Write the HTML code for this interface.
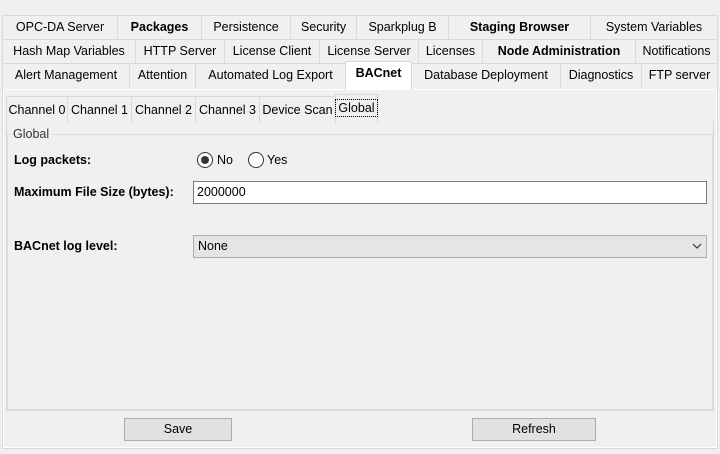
<!DOCTYPE html>
<html><head><style>
*{margin:0;padding:0;box-sizing:border-box}
body{width:720px;height:454px;background:#f0f0f0;font-family:"Liberation Sans",sans-serif;font-size:12.5px;color:#000;position:relative;overflow:hidden}
.a{position:absolute}
.t{position:absolute;border:1px solid #d9d9d9;border-bottom:none;background:#f0f0f0;text-align:center;white-space:nowrap}
.b{font-weight:bold}
.lbl{position:absolute;font-weight:bold}
.rad{position:absolute;width:16px;height:16px;border:1px solid #333;border-radius:50%;background:#fff}
.btn{position:absolute;border:1px solid #adadad;background:#e1e1e1;text-align:center;line-height:21px}
</style></head><body>
<div class="a" style="left:2px;top:88px;width:716px;height:361px;border:1px solid #d9d9d9;background:#f0f0f0;box-shadow:inset 1px 1px 0 #fff,inset -1px -1px 0 #fff"></div>

<div class="t" style="left:2px;top:15px;width:116px;height:24px;line-height:23px">OPC-DA Server</div>
<div class="t b" style="left:117px;top:15px;width:85px;height:24px;line-height:23px">Packages</div>
<div class="t" style="left:201px;top:15px;width:90px;height:24px;line-height:23px">Persistence</div>
<div class="t" style="left:290px;top:15px;width:67px;height:24px;line-height:23px">Security</div>
<div class="t" style="left:356px;top:15px;width:93px;height:24px;line-height:23px">Sparkplug B</div>
<div class="t b" style="left:448px;top:15px;width:143px;height:24px;line-height:23px">Staging Browser</div>
<div class="t" style="left:590px;top:15px;width:128px;height:24px;line-height:23px">System Variables</div>

<div class="t" style="left:2px;top:39px;width:134px;height:24px;line-height:23px">Hash Map Variables</div>
<div class="t" style="left:135px;top:39px;width:90px;height:24px;line-height:23px">HTTP Server</div>
<div class="t" style="left:224px;top:39px;width:96px;height:24px;line-height:23px">License Client</div>
<div class="t" style="left:319px;top:39px;width:100px;height:24px;line-height:23px">License Server</div>
<div class="t" style="left:418px;top:39px;width:65px;height:24px;line-height:23px">Licenses</div>
<div class="t b" style="left:482px;top:39px;width:154px;height:24px;line-height:23px">Node Administration</div>
<div class="t" style="left:635px;top:39px;width:83px;height:24px;line-height:23px">Notifications</div>

<div class="t" style="left:2px;top:63px;width:128px;height:26px;line-height:23px">Alert Management</div>
<div class="t" style="left:129px;top:63px;width:67px;height:26px;line-height:23px">Attention</div>
<div class="t" style="left:195px;top:63px;width:151px;height:26px;line-height:23px">Automated Log Export</div>
<div class="t" style="left:411px;top:63px;width:150px;height:26px;line-height:23px">Database Deployment</div>
<div class="t" style="left:560px;top:63px;width:82px;height:26px;line-height:23px">Diagnostics</div>
<div class="t" style="left:641px;top:63px;width:77px;height:26px;line-height:23px">FTP server</div>
<div class="t b" style="left:345px;top:61px;width:67px;height:29px;line-height:22px;background:#fff">BACnet</div>

<div class="a" style="left:6px;top:121px;width:708px;height:290px;border:1px solid #d9d9d9;border-top:none"></div>
<div class="t" style="left:6px;top:96px;width:62px;height:26px;line-height:27px">Channel 0</div>
<div class="t" style="left:67px;top:96px;width:65px;height:26px;line-height:27px">Channel 1</div>
<div class="t" style="left:131px;top:96px;width:65px;height:26px;line-height:27px">Channel 2</div>
<div class="t" style="left:195px;top:96px;width:65px;height:26px;line-height:27px">Channel 3</div>
<div class="t" style="left:259px;top:96px;width:77px;height:26px;line-height:27px">Device Scan</div>
<div class="t" style="left:335px;top:94px;width:43px;height:29px;line-height:27px"><span style="outline:1px dotted #000;padding:1px 2px">Global</span></div>

<div class="a" style="left:7px;top:134px;width:706px;height:276px;border:1px solid #dcdcdc"></div>
<div class="a" style="left:11px;top:127px;background:#f0f0f0;padding:0 2px;color:#333">Global</div>

<div class="lbl" style="left:14px;top:153px">Log packets:</div>
<div class="rad" style="left:197px;top:152px"><div class="a" style="left:3px;top:3px;width:8px;height:8px;border-radius:50%;background:#333"></div></div>
<div class="a" style="left:217px;top:153px">No</div>
<div class="rad" style="left:248px;top:152px"></div>
<div class="a" style="left:267px;top:153px">Yes</div>

<div class="lbl" style="left:14px;top:185px">Maximum File Size (bytes):</div>
<div class="a" style="left:193px;top:181px;width:514px;height:23px;border:1px solid #7a7a7a;background:#fff;padding-left:3px;line-height:21px">2000000</div>

<div class="lbl" style="left:14px;top:239px">BACnet log level:</div>
<div class="a" style="left:193px;top:235px;width:514px;height:23px;border:1px solid #adadad;background:#e5e5e5;padding-left:4px;line-height:21px">None</div>
<svg class="a" style="left:692px;top:242px" width="10" height="8"><path d="M1 2 L5 6 L9 2" fill="none" stroke="#333" stroke-width="1.2"/></svg>

<div class="btn" style="left:124px;top:418px;width:108px;height:23px">Save</div>
<div class="btn" style="left:472px;top:418px;width:124px;height:23px">Refresh</div>
</body></html>
